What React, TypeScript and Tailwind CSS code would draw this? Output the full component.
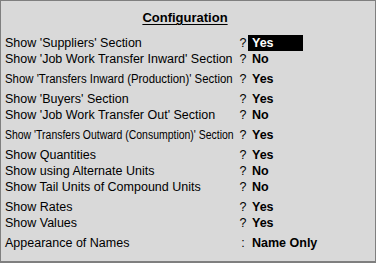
import React from 'react';

type Row = {
  label: string;
  value: string;
  sep?: string;
  gap?: boolean;
  squeeze?: string;
  active?: boolean;
};

const rows: Row[] = [
  { label: "Show 'Suppliers' Section", value: 'Yes', active: true },
  { label: "Show 'Job Work Transfer Inward' Section", value: 'No' },
  { label: "Show 'Transfers Inward (Production)' Section", value: 'Yes', gap: true, squeeze: 'scale-x-[0.912]' },
  { label: "Show 'Buyers' Section", value: 'Yes', gap: true },
  { label: "Show 'Job Work Transfer Out' Section", value: 'No' },
  { label: "Show 'Transfers Outward (Consumption)' Section", value: 'Yes', gap: true, squeeze: 'scale-x-[0.837]' },
  { label: 'Show Quantities', value: 'Yes', gap: true },
  { label: 'Show using Alternate Units', value: 'No' },
  { label: 'Show Tail Units of Compound Units', value: 'No' },
  { label: 'Show Rates', value: 'Yes', gap: true },
  { label: 'Show Values', value: 'Yes' },
  { label: 'Appearance of Names', value: 'Name Only', sep: ':', gap: true },
];

export default function App() {
  return (
    <div className="w-[376px] h-[263px] bg-[#d9d9d9] border border-b-2 border-[#7f7f7f] font-['Liberation_Sans',Arial,sans-serif] text-black overflow-hidden">
      <div className="pt-[9px] pr-[6px] text-center text-[13px] leading-[16px]">
        <span className="font-bold underline underline-offset-2">Configuration</span>
      </div>
      <div className="mt-[9px] pl-[4px] flex flex-col text-[12.5px] leading-[16px]">
        {rows.map((r) => (
          <div key={r.label} className={`flex h-[16px] ${r.gap ? 'mt-[4px]' : ''}`}>
            <div className="w-[233px] whitespace-nowrap">
              {r.squeeze ? (
                <span className={`inline-block origin-left ${r.squeeze}`}>{r.label}</span>
              ) : (
                r.label
              )}
            </div>
            <div className="w-[10px] text-center">{r.sep ?? '?'}</div>
            <div
              className={`font-bold pl-[4px] whitespace-nowrap ${
                r.active ? 'w-[55px] bg-black text-white' : ''
              }`}
            >
              {r.value}
            </div>
          </div>
        ))}
      </div>
    </div>
  );
}
